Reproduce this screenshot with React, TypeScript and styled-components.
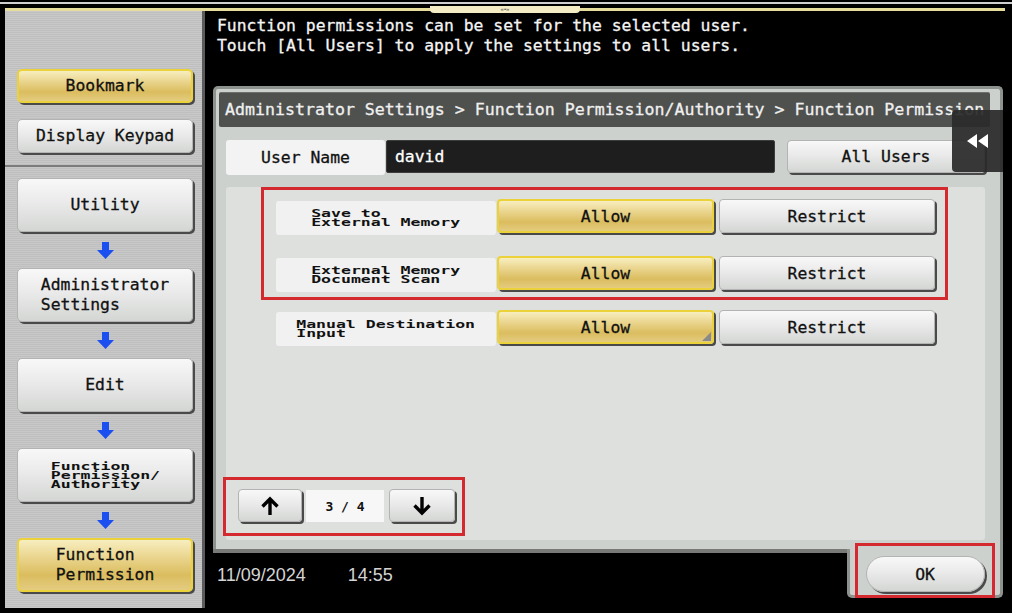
import React from 'react';
import styled, { createGlobalStyle, css } from 'styled-components';

const MONO = `"DejaVu Sans Mono", "Liberation Mono", monospace`;

const GlobalStyle = createGlobalStyle`
  html, body {
    margin: 0;
    padding: 0;
    background: #000;
  }
  body {
    font-family: ${MONO};
  }
`;

type Tone = 'gold' | 'gray';

const toneStyles = {
  gold: css`
    background: linear-gradient(180deg, #f7eebf 0%, #ead58e 35%, #dbbd5f 70%, #e4cc80 100%);
    border: 2px solid #ecd23a;
  `,
  gray: css`
    background: linear-gradient(180deg, #f8f8f8 0%, #e9eae9 45%, #d4d6d4 100%);
    border: 1px solid #b3b3b3;
  `,
};

// the panel font is a heavy, narrow mono; a hairline stroke thickens DejaVu a bit
const heavy = css`
  -webkit-text-stroke: 0.3px currentColor;
`;

const Screen = styled.div`
  width: 1012px;
  height: 613px;
  background: #000;
  display: flex;
  flex-direction: column;
  overflow: hidden;
`;

const TopRule = styled.div`
  height: 2px;
  margin-top: 2px;
  background: #cfcfcf;
`;

const HandleStrip = styled.div`
  margin: 4px 7px 0 5px;
  height: 3px;
  background: #e6dc9c;
  display: flex;
  justify-content: center;
`;

const Handle = styled.div`
  width: 150px;
  height: 7px;
  margin-top: -2px;
  background: #f3ecc4;
  border-radius: 0 0 4px 4px;
  font-family: "Liberation Sans", sans-serif;
  font-size: 6px;
  line-height: 7px;
  color: #555;
  text-align: center;
`;

const Body = styled.div`
  display: flex;
  margin: 0 7px 0 5px;
  height: 597px;
`;

const Sidebar = styled.aside`
  width: 197px;
  border-right: 3px solid #5c5c5c;
  background: repeating-linear-gradient(0deg, #c8c8c8 0 1px, #bfbfbf 1px 2px);
  display: flex;
  flex-direction: column;
`;

const SidebarTop = styled.div`
  display: flex;
  flex-direction: column;
  gap: 16px;
  padding: 58px 0 12px 12px;
  border-bottom: 2px solid #7c7c7c;
`;

const Nav = styled.nav`
  display: flex;
  flex-direction: column;
  align-items: flex-start;
  padding: 11px 0 0 12px;
`;

const SideButton = styled.button<{ $tone: Tone; $h: number }>`
  width: 176px;
  height: ${p => p.$h}px;
  padding: 0;
  border-radius: 5px;
  box-shadow: 2px 2px 0 #4a4a4a;
  font-family: ${MONO};
  font-size: 16.4px;
  line-height: 20px;
  color: #111;
  display: flex;
  align-items: center;
  justify-content: center;
  ${heavy}
  ${p => toneStyles[p.$tone]}
`;

const TextBlock = styled.span`
  display: inline-block;
  text-align: left;
`;

const PixelText = styled.span`
  display: inline-block;
  text-align: left;
  font-family: ${MONO};
  font-weight: bold;
  font-size: 11px;
  line-height: 9px;
  color: #111;
  transform: scaleX(1.5);
  white-space: pre;
  -webkit-text-stroke: 0;
`;

const ArrowSlot = styled.div`
  width: 176px;
  height: 36px;
  display: flex;
  align-items: center;
  justify-content: center;
`;

const Main = styled.main`
  flex: 1;
  margin-left: 7px;
  display: flex;
  flex-direction: column;
`;

const Header = styled.div`
  height: 70px;
  padding: 5px 0 0 5px;
  color: #f4f4f4;
  font-size: 16.4px;
  line-height: 20px;
  white-space: pre;
  ${heavy}
`;

const Panel = styled.section`
  position: relative;
  margin: 0 2px 0 1px;
  border: 3px solid #8e928e;
  border-bottom: none;
  border-radius: 5px 5px 0 0;
  background: #cdd1cd;
  padding: 3px 10px 9px 3px;
`;

const Breadcrumb = styled.div`
  height: 35px;
  box-sizing: border-box;
  background: #4f514f;
  border-top: 1px solid #6e6e6e;
  border-radius: 2px;
  color: #f0f0f0;
  font-size: 16.6px;
  line-height: 33px;
  padding-left: 6px;
  white-space: nowrap;
  overflow: hidden;
  ${heavy}
`;

const CollapseTab = styled.div`
  position: absolute;
  left: 736px;
  top: 21px;
  width: 51px;
  height: 62px;
  background: rgba(42, 42, 42, 0.93);
  border-radius: 4px 0 0 4px;
  display: flex;
  align-items: center;
  justify-content: center;
  z-index: 2;
`;

const UserRow = styled.div`
  display: flex;
  height: 35px;
  margin: 13px 5px 0 7px;
`;

const UserLabel = styled.div`
  width: 159px;
  background: #f3f3f3;
  border-radius: 3px;
  display: flex;
  align-items: center;
  justify-content: center;
  font-size: 16.4px;
  color: #111;
  ${heavy}
`;

const NameField = styled.div`
  width: 389px;
  height: 33px;
  box-sizing: border-box;
  margin-left: 1px;
  background: #1e1e1e;
  border: 1px solid #3c3c3c;
  border-radius: 2px;
  color: #fff;
  font-size: 16.4px;
  line-height: 31px;
  padding-left: 8px;
  ${heavy}
`;

const WideButton = styled.button<{ $tone: Tone }>`
  flex: 1;
  margin-left: 12px;
  height: 33px;
  border-radius: 4px;
  box-shadow: 2px 2px 0 #4a4a4a;
  font-family: ${MONO};
  font-size: 16.4px;
  color: #111;
  padding: 0;
  ${heavy}
  ${p => toneStyles[p.$tone]}
`;

const List = styled.div`
  height: 353px;
  margin: 12px 5px 0 7px;
  background: #dde0dd;
  border-radius: 3px;
  display: flex;
  flex-direction: column;
`;

const Highlight = styled.div`
  border: 3px solid #d42a2f;
`;

const RowGroup = styled(Highlight)`
  margin-left: 35px;
  width: 687px;
  box-sizing: border-box;
  padding: 9px 10px 5px 12px;
  display: flex;
  flex-direction: column;
  gap: 21px;
`;

const Row = styled.div<{ $loose?: boolean }>`
  display: flex;
  align-items: flex-start;
  height: 36px;
  ${p => p.$loose && css`
    margin: 10px 0 0 50px;
  `}
`;

const RowLabel = styled.div`
  width: 220px;
  height: 34px;
  margin-top: 2px;
  background: #f1f1f1;
  border-radius: 3px;
  display: flex;
  align-items: center;
  justify-content: center;
`;

const Choice = styled.button<{ $tone: Tone; $w: number; $gap: number; $marked?: boolean }>`
  position: relative;
  width: ${p => p.$w}px;
  height: 34px;
  margin-left: ${p => p.$gap}px;
  border-radius: 4px;
  box-shadow: 2px 2px 0 #4a4a4a;
  font-family: ${MONO};
  font-size: 16.4px;
  color: #111;
  padding: 0;
  ${heavy}
  ${p => toneStyles[p.$tone]}
  ${p => p.$marked && css`
    &::after {
      content: '';
      position: absolute;
      right: 1px;
      bottom: 1px;
      border-style: solid;
      border-width: 0 0 9px 9px;
      border-color: transparent transparent #8a8a8a transparent;
    }
  `}
`;

const Pager = styled(Highlight)`
  margin: auto 0 4px -3px;
  width: 242px;
  height: 59px;
  box-sizing: border-box;
  padding: 9px 0 0 12px;
  display: flex;
  align-items: flex-start;
`;

const PageButton = styled.button<{ $w: number; $gap: number }>`
  width: ${p => p.$w}px;
  height: 33px;
  margin-left: ${p => p.$gap}px;
  border-radius: 4px;
  box-shadow: 2px 2px 0 #4a4a4a;
  padding: 0;
  display: flex;
  align-items: center;
  justify-content: center;
  ${toneStyles.gray}
`;

const PageCount = styled.div`
  width: 78px;
  height: 32px;
  margin: 1px 0 0 4px;
  background: #f7f7f7;
  display: flex;
  align-items: center;
  justify-content: center;
  font-weight: bold;
  font-size: 13px;
  color: #111;
`;

const Footer = styled.footer`
  display: flex;
  height: 49px;
  margin: 0 2px 0 1px;
`;

const Clock = styled.div`
  flex: 1;
  border-top: 4px solid #777a77;
  padding: 0 0 0 4px;
  display: flex;
  align-items: center;
  gap: 42px;
  font-family: "Liberation Sans", Arial, sans-serif;
  font-size: 18px;
  color: #d4d4d4;
`;

const OkTab = styled.div`
  position: relative;
  width: 156px;
  box-sizing: border-box;
  background: #cdd1cd;
  border: 3px solid #8e928e;
  border-top: none;
  border-radius: 0 0 5px 5px;
  display: flex;
  justify-content: center;
  padding-top: 7px;
`;

const OkButton = styled.button`
  width: 119px;
  height: 36px;
  border-radius: 18px;
  box-shadow: 2px 2px 0 #4a4a4a;
  font-family: ${MONO};
  font-size: 16.4px;
  color: #111;
  padding: 0;
  ${heavy}
  ${toneStyles.gray}
`;

const OkMark = styled(Highlight)`
  position: absolute;
  left: 5px;
  top: -6px;
  width: 140px;
  height: 55px;
  box-sizing: border-box;
  pointer-events: none;
`;

const FlowArrow = () => (
  <svg width="17" height="17" viewBox="0 0 17 17">
    <path d="M5 0h7v8h5l-8.5 9L0 8h5z" fill="#1c4ff0" />
  </svg>
);

const PageArrow = ({ down }: { down?: boolean }) => (
  <svg width="22" height="22" viewBox="0 0 22 22" style={down ? { transform: 'rotate(180deg)' } : undefined}>
    <path d="M11 20V4M3.5 11.5L11 4l7.5 7.5" stroke="#000" strokeWidth="3.4" fill="none" />
  </svg>
);

const CollapseIcon = () => (
  <svg width="22" height="14" viewBox="0 0 22 14">
    <path d="M0 7L10 0v14zM11 7L21 0v14z" fill="#fff" />
  </svg>
);

const steps: { label: React.ReactNode; tone: Tone }[] = [
  { label: 'Utility', tone: 'gray' },
  { label: <TextBlock>Administrator<br />Settings</TextBlock>, tone: 'gray' },
  { label: 'Edit', tone: 'gray' },
  { label: <PixelText>{'Function\nPermission/\nAuthority'}</PixelText>, tone: 'gray' },
  { label: <TextBlock>Function<br />Permission</TextBlock>, tone: 'gold' },
];

const permissions = [
  { name: 'Save to\nExternal Memory' },
  { name: 'External Memory\nDocument Scan' },
];

const PermissionRow = ({ name, loose, marked }: { name: string; loose?: boolean; marked?: boolean }) => (
  <Row $loose={loose}>
    <RowLabel>
      <PixelText>{name}</PixelText>
    </RowLabel>
    <Choice $tone="gold" $w={217} $gap={1} $marked={marked}>Allow</Choice>
    <Choice $tone="gray" $w={216} $gap={5}>Restrict</Choice>
  </Row>
);

export default function App() {
  return (
    <>
      <GlobalStyle />
      <Screen>
        <TopRule />
        <HandleStrip>
          <Handle>«•»</Handle>
        </HandleStrip>
        <Body>
          <Sidebar>
            <SidebarTop>
              <SideButton $tone="gold" $h={34}>Bookmark</SideButton>
              <SideButton $tone="gray" $h={34}>Display Keypad</SideButton>
            </SidebarTop>
            <Nav>
              {steps.map((step, i) => (
                <React.Fragment key={i}>
                  {i > 0 && (
                    <ArrowSlot>
                      <FlowArrow />
                    </ArrowSlot>
                  )}
                  <SideButton $tone={step.tone} $h={54}>{step.label}</SideButton>
                </React.Fragment>
              ))}
            </Nav>
          </Sidebar>
          <Main>
            <Header>
              {'Function permissions can be set for the selected user.\nTouch [All Users] to apply the settings to all users.'}
            </Header>
            <Panel>
              <Breadcrumb>
                Administrator Settings &gt; Function Permission/Authority &gt; Function Permission
              </Breadcrumb>
              <CollapseTab>
                <CollapseIcon />
              </CollapseTab>
              <UserRow>
                <UserLabel>User Name</UserLabel>
                <NameField>david</NameField>
                <WideButton $tone="gray">All Users</WideButton>
              </UserRow>
              <List>
                <RowGroup>
                  {permissions.map(p => (
                    <PermissionRow key={p.name} name={p.name} />
                  ))}
                </RowGroup>
                <PermissionRow name={'Manual Destination\nInput'} loose marked />
                <Pager>
                  <PageButton $w={64} $gap={0}>
                    <PageArrow />
                  </PageButton>
                  <PageCount>3 / 4</PageCount>
                  <PageButton $w={66} $gap={5}>
                    <PageArrow down />
                  </PageButton>
                </Pager>
              </List>
            </Panel>
            <Footer>
              <Clock>
                <span>11/09/2024</span>
                <span>14:55</span>
              </Clock>
              <OkTab>
                <OkButton>OK</OkButton>
                <OkMark />
              </OkTab>
            </Footer>
          </Main>
        </Body>
      </Screen>
    </>
  );
}
